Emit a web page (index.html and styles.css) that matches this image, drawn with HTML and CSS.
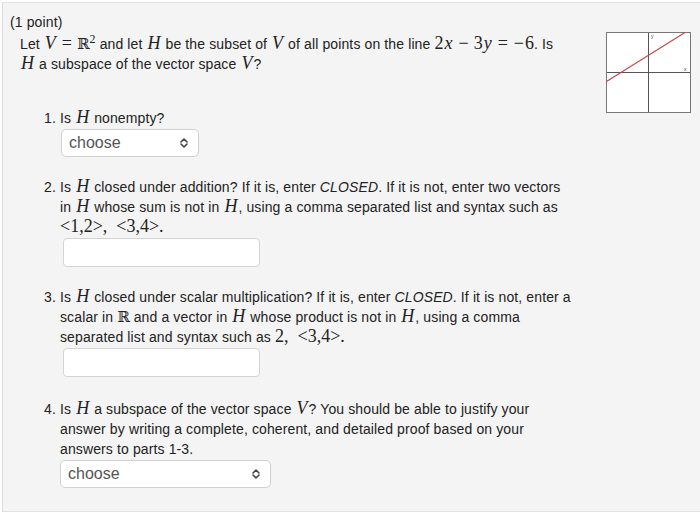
FILE: index.html
```html
<!DOCTYPE html>
<html>
<head>
<meta charset="utf-8">
<link rel="stylesheet" href="styles.css">
</head>
<body>
<div class="panel">
  <div class="points">(1 point)</div>
  <div class="intro">
    <svg class="graph" width="85" height="81" viewBox="0 0 85 81">
      <rect x="0.5" y="0.5" width="84" height="80" fill="#fff" stroke="#777" stroke-width="1"/>
      <line x1="42.5" y1="1" x2="42.5" y2="80" stroke="#555" stroke-width="1"/>
      <line x1="1" y1="40.5" x2="84" y2="40.5" stroke="#555" stroke-width="1"/>
      <line x1="0.5" y1="49.5" x2="79" y2="0.5" stroke="#c8424a" stroke-width="1.1"/>
      <text x="45" y="6" font-size="5" fill="#444" font-family="Liberation Sans, sans-serif">y</text>
      <text x="78" y="38.5" font-size="5" fill="#444" font-family="Liberation Sans, sans-serif">x</text>
    </svg>
    <p class="text">Let <span class="m">V</span> <span class="op">=</span> <span class="bb">ℝ</span><sup class="sup">2</sup> and let <span class="m">H</span> be the subset of <span class="m">V</span> of all points on the line <span class="n">2</span><span class="m">x</span> <span class="op">−</span> <span class="n">3</span><span class="m">y</span> <span class="op">=</span> <span class="op">−</span><span class="n">6</span>. Is<br><span class="m">H</span> a subspace of the vector space <span class="m">V</span>?</p>
  </div>
  <ol class="parts">
    <li class="part">
      <div>Is <span class="m">H</span> nonempty?</div>
      <div class="select select-short"><span class="choose">choose</span>
        <svg class="chev" width="10" height="12" viewBox="0 0 10 12"><path d="M2 5 L5 2 L8 5 M2 7 L5 10 L8 7" fill="none" stroke="#444" stroke-width="1.6" stroke-linecap="round" stroke-linejoin="round"/></svg>
      </div>
    </li>
    <li class="part">
      <div>Is <span class="m">H</span> closed under addition? If it is, enter <i>CLOSED</i>. If it is not, enter two vectors<br>in <span class="m">H</span> whose sum is not in <span class="m">H</span>, using a comma separated list and syntax such as<br><span class="n">&lt;1,2&gt;,&nbsp; &lt;3,4&gt;.</span></div>
      <div class="field"></div>
    </li>
    <li class="part">
      <div>Is <span class="m">H</span> closed under scalar multiplication? If it is, enter <i>CLOSED</i>. If it is not, enter a<br>scalar in <span class="bb">ℝ</span> and a vector in <span class="m">H</span> whose product is not in <span class="m">H</span>, using a comma<br>separated list and syntax such as <span class="n">2,&nbsp; &lt;3,4&gt;.</span></div>
      <div class="field"></div>
    </li>
    <li class="part part-last">
      <div>Is <span class="m">H</span> a subspace of the vector space <span class="m">V</span>? You should be able to justify your<br>answer by writing a complete, coherent, and detailed proof based on your<br>answers to parts 1-3.</div>
      <div class="select select-long"><span class="choose">choose</span>
        <svg class="chev" width="10" height="12" viewBox="0 0 10 12"><path d="M2 5 L5 2 L8 5 M2 7 L5 10 L8 7" fill="none" stroke="#444" stroke-width="1.6" stroke-linecap="round" stroke-linejoin="round"/></svg>
      </div>
    </li>
  </ol>
</div>
</body>
</html>
```
FILE: styles.css
```css
html, body {
  margin: 0;
  padding: 0;
  background: #fff;
}
body {
  font-family: "Liberation Sans", Helvetica, Arial, sans-serif;
  font-size: 14px;
  line-height: 20px;
  letter-spacing: 0.12px;
  color: #222;
  overflow: hidden;
}
.panel {
  margin: 2px 0 0 2px;
  border-left: 1px solid #dcdcdc;
  border-top: 1px solid #e2e2e2;
  border-bottom: 1px solid #e2e2e2;
  background: #f4f4f4;
  padding: 9px 0 0 7px;
  height: 499px;
}
.points {
  line-height: 20px;
}
.intro {
  margin: 2px 0 0 10px;
}
.graph {
  float: right;
  margin: -2px 9px 0 10px;
  display: block;
}
.text {
  margin: 0;
}
.m {
  font-family: "Liberation Serif", "Times New Roman", serif;
  font-style: italic;
  font-size: 18px;
  line-height: 1;
  letter-spacing: 0;
  margin: 0 1px;
}
.n, .op {
  font-family: "Liberation Serif", "Times New Roman", serif;
  font-size: 18px;
  line-height: 1;
  letter-spacing: 0;
}
.op {
  margin: 0 1px;
}
.bb {
  font-family: "DejaVu Serif", "DejaVu Sans", serif;
  font-size: 15px;
  line-height: 1;
  letter-spacing: 0;
}
.sup {
  font-family: "Liberation Serif", serif;
  font-size: 12px;
  line-height: 0;
  vertical-align: 6px;
}
.parts {
  margin: 34px 0 0 0;
  padding-left: 50px;
}
.part {
  margin-bottom: 20px;
}
.part-last {
  margin-top: 22px;
}
.select {
  box-sizing: border-box;
  height: 28px;
  margin-top: 1px;
  background: #fff;
  border: 1px solid #d0d0d0;
  border-radius: 5px;
  display: flex;
  align-items: center;
  justify-content: space-between;
  padding: 0 9px 0 7px;
}
.select-short {
  width: 138px;
  margin-left: 1px;
}
.select-long {
  width: 211px;
  margin-left: 0;
}
.choose {
  font-size: 16px;
  color: #555;
  letter-spacing: 0;
}
.chev {
  display: block;
}
.field {
  box-sizing: border-box;
  width: 197px;
  height: 29px;
  margin: 1px 0 0 3px;
  background: #fff;
  border: 1px solid #d4d4d4;
  border-radius: 4px;
}
```
